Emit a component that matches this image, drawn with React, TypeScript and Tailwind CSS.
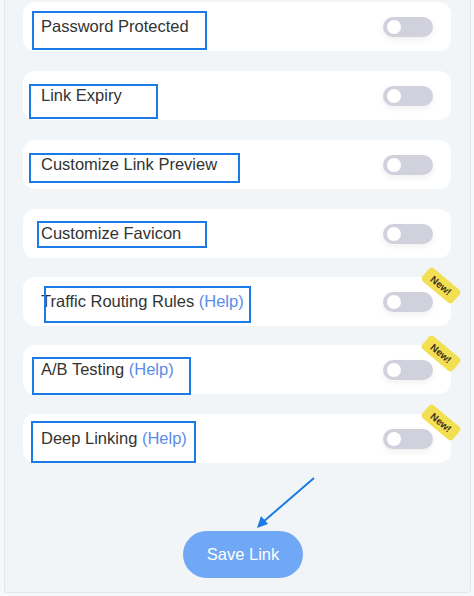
import React from "react";

type Row = { label: string; help?: boolean; isNew?: boolean; mt: number };

const rows: Row[] = [
  { label: "Password Protected", mt: 0 },
  { label: "Link Expiry", mt: 20 },
  { label: "Customize Link Preview", mt: 20 },
  { label: "Customize Favicon", mt: 20 },
  { label: "Traffic Routing Rules", help: true, isNew: true, mt: 19 },
  { label: "A/B Testing", help: true, isNew: true, mt: 19 },
  { label: "Deep Linking", help: true, isNew: true, mt: 20 },
];

const boxes = [
  { l: 32, t: 11, w: 175, h: 39 },
  { l: 29, t: 84, w: 129, h: 35 },
  { l: 29, t: 153, w: 211, h: 30 },
  { l: 37, t: 221, w: 170, h: 27 },
  { l: 44, t: 286, w: 207, h: 37 },
  { l: 32, t: 357, w: 159, h: 38 },
  { l: 31, t: 421, w: 165, h: 42 },
];

function Toggle() {
  return (
    <div className="w-[50px] h-[20px] rounded-full bg-[#d0d1dc] flex items-center pl-[4px] shadow-[0_3px_6px_rgba(0,0,0,0.06)]">
      <div className="w-[14px] h-[14px] rounded-full bg-white" />
    </div>
  );
}

export default function App() {
  return (
    <div
      className="relative w-[474px] h-[596px] overflow-hidden bg-[#f7f8f9]"
      style={{ fontFamily: '"Liberation Sans", Arial, sans-serif' }}
    >
      <div className="ml-[4px] w-[467px] h-[593px] bg-[#f2f5f7] border-x border-b border-[#e2e5e9] rounded-b-[4px] pl-[18px] pr-[18px] pt-[2px] flex flex-col">
        {rows.map((r, i) => (
          <div
            key={i}
            className="relative h-[49px] w-[428px] bg-white rounded-[12px] flex items-center justify-between pl-[18px] pr-[18px] shrink-0"
            style={{ marginTop: r.mt }}
          >
            <span className="text-[16.5px] text-[#333333] leading-none">
              {r.label}
              {r.help && <span className="text-[#5a8cea]"> (Help)</span>}
            </span>
            <Toggle />
            {r.isNew && (
              <div className="absolute top-[0px] left-[398px] w-[40px] h-[17px] rounded-[4px] bg-[#f3df52] rotate-[40deg] flex items-center justify-center">
                <span className="text-[10px] font-bold text-[#3a3520] leading-none">New!</span>
              </div>
            )}
          </div>
        ))}
        <div className="mt-[68px] pl-[160px]">
          <button className="w-[120px] h-[47px] rounded-full bg-[#70a8f6] text-white text-[16.5px] leading-none">
            Save Link
          </button>
        </div>
      </div>

      {boxes.map((b, i) => (
        <div
          key={i}
          className="absolute border-2 border-[#1a7be6]"
          style={{ left: b.l, top: b.t, width: b.w, height: b.h }}
        />
      ))}

      <svg className="absolute left-0 top-0" width="474" height="596" viewBox="0 0 474 596">
        <line x1="314" y1="478" x2="263" y2="522" stroke="#1a7be6" strokeWidth="2" />
        <polygon points="257,528 261,516 268,524" fill="#1a7be6" />
      </svg>
    </div>
  );
}
